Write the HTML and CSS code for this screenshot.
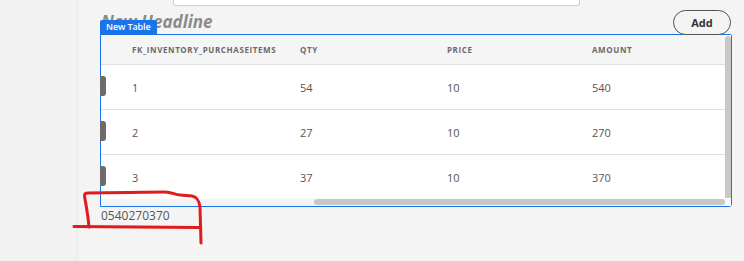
FILE: index.html
```html
<!DOCTYPE html>
<html>
<head>
<meta charset="utf-8">
<link rel="stylesheet" href="styles.css">
</head>
<body>
<div class="app">
  <aside class="side"></aside>
  <div class="shade"></div>
  <main class="main">
    <div class="topinput"></div>
    <div class="head">
      <h1 class="headline">New Headline</h1>
      <button class="add">Add</button>
    </div>
    <div class="tablewrap">
      <span class="badge">New Table</span>
      <div class="viewport">
        <div class="row hdr">
          <div class="cell">FK_INVENTORY_PURCHASEITEMS</div>
          <div class="cell">QTY</div>
          <div class="cell">PRICE</div>
          <div class="cell">AMOUNT</div>
        </div>
        <div class="row">
          <span class="handle"></span>
          <div class="cell">1</div>
          <div class="cell">54</div>
          <div class="cell">10</div>
          <div class="cell">540</div>
        </div>
        <div class="row">
          <span class="handle"></span>
          <div class="cell">2</div>
          <div class="cell">27</div>
          <div class="cell">10</div>
          <div class="cell">270</div>
        </div>
        <div class="row last">
          <span class="handle"></span>
          <div class="cell">3</div>
          <div class="cell">37</div>
          <div class="cell">10</div>
          <div class="cell">370</div>
        </div>
      </div>
      <div class="vscroll"><div class="vthumb"></div></div>
      <div class="hscroll"><div class="hthumb"></div></div>
      <div class="corner"></div>
    </div>
    <div class="total">0540270370</div>
  </main>
</div>
<svg class="scribble" width="744" height="261" viewBox="0 0 744 261">
  <path d="M89 227 C88 215 86 205 85 199 C84 195 84 193 88 193 L165 192 C172 192 175 195 180 195 L192 196 C197 197 199 200 200 207 L201 243" fill="none" stroke="#e11b1b" stroke-width="3" stroke-linecap="round" stroke-linejoin="round"/>
  <path d="M74 226.5 L199 227.5" fill="none" stroke="#e11b1b" stroke-width="3" stroke-linecap="round"/>
</svg>
</body>
</html>
```
FILE: styles.css
```css
html, body {
  margin: 0;
  padding: 0;
}
body {
  width: 744px;
  height: 261px;
  overflow: hidden;
  background: #f4f4f4;
  font-family: "Open Sans", "Liberation Sans", sans-serif;
  position: relative;
}
.app {
  display: flex;
  height: 261px;
}
.side {
  width: 76px;
  background: #f2f2f2;
  flex: none;
}
.shade {
  width: 4px;
  flex: none;
  background: linear-gradient(to right, #ebebeb, #f4f4f4);
}
.main {
  flex: 1;
  padding-left: 20px;
  display: flex;
  flex-direction: column;
}
.topinput {
  margin-left: 73px;
  width: 405px;
  height: 5px;
  background: #fff;
  border: 1px solid #cfcfcf;
  border-top: none;
  border-radius: 0 0 3px 3px;
}
.head {
  width: 632px;
  height: 28px;
  display: flex;
  justify-content: space-between;
  align-items: flex-start;
}
.headline {
  margin: 5px 0 0 1px;
  font-size: 17px;
  line-height: 21px;
  font-style: italic;
  font-weight: 700;
  color: #8a8a8a;
}
.add {
  position: relative;
  z-index: 2;
  margin: 4px 1px 0 0;
  width: 58px;
  height: 25px;
  box-sizing: border-box;
  border: 1px solid #555;
  border-radius: 13px;
  background: #f4f4f4;
  font-family: inherit;
  font-size: 11px;
  font-weight: 700;
  color: #333;
  padding: 0;
}
.tablewrap {
  position: relative;
  width: 632px;
  box-sizing: border-box;
  border: 1px solid #1a73e8;
  border-radius: 0 2px 3px 0;
  display: grid;
  grid-template-columns: 624px 6px;
  grid-template-rows: auto 7px;
  background: #f4f4f4;
}
.badge {
  position: absolute;
  left: -1px;
  top: -15px;
  height: 15px;
  padding: 0 6px;
  background: #1a73e8;
  color: #fff;
  font-size: 9px;
  font-weight: 600;
  line-height: 14px;
  letter-spacing: -0.1px;
  border-radius: 2px 3px 0 0;
  z-index: 3;
}
.viewport {
  background: #fff;
}
.row {
  position: relative;
  display: grid;
  grid-template-columns: 168px 147px 145px 1fr;
  padding-left: 31px;
  height: 44px;
  align-items: center;
  border-bottom: 1px solid #e0e0e0;
  font-size: 11px;
  color: #555;
}
.row.last {
  border-bottom: none;
}
.row.hdr {
  height: 29px;
  background: #f5f5f5;
  font-size: 8px;
  font-weight: 700;
  letter-spacing: 0.6px;
  color: #6a6a6a;
}
.handle {
  position: absolute;
  left: -1px;
  top: 11px;
  width: 6px;
  height: 20px;
  background: #6c6c6c;
  border-radius: 0 3px 3px 0;
}
.vscroll {
  background: #fff;
  padding-top: 1px;
}
.vthumb {
  height: 162px;
  background: #c8c8c8;
  border-radius: 3px 3px 0 0;
}
.hscroll {
  padding-left: 213px;
  background: #f4f4f4;
}
.hthumb {
  height: 6px;
  background: #c8c8c8;
  border-radius: 3px;
}
.corner {
  background: #fafafa;
}
.total {
  margin: 1px 0 0 1px;
  font-size: 12px;
  line-height: 16px;
  color: #555;
}
.scribble {
  position: absolute;
  left: 0;
  top: 0;
  pointer-events: none;
}
```
